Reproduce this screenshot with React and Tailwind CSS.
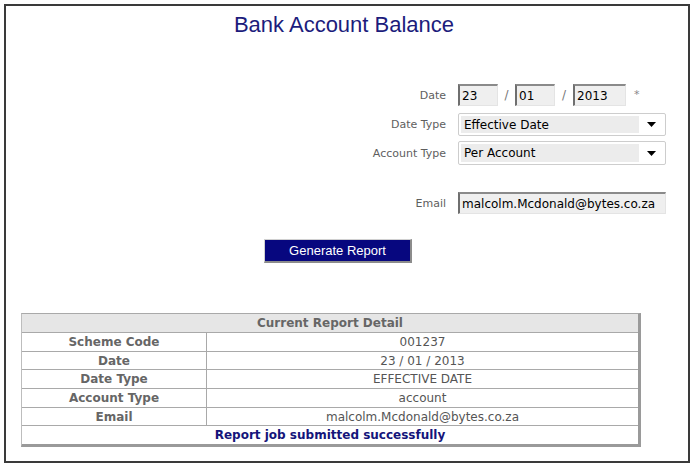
import React from "react";

const dv = { fontFamily: '"DejaVu Sans", Verdana, sans-serif' };
const ar = { fontFamily: '"Liberation Sans", Arial, sans-serif' };

function Arrow() {
  return (
    <svg width="9" height="5" viewBox="0 0 9 5" className="block">
      <path d="M0 0 H9 L4.5 5 Z" fill="#000" />
    </svg>
  );
}

function InsetInput({ value, w }) {
  return (
    <div
      className={`${w} h-[22px] flex items-center bg-[#efefef] border-l-2 border-t-2 border-r border-b border-l-[#6f6f6f] border-t-[#8a8a8a] border-r-[#e4e4e4] border-b-[#e4e4e4] pl-[2px] text-[12px] text-black leading-none`}
      style={dv}
    >
      {value}
    </div>
  );
}

function Select({ value, h }) {
  return (
    <div className={`w-[208px] ${h} flex border border-[#cdcdcd] rounded-[2px] bg-white p-[2px]`}>
      <div className="flex-1 bg-[#ececec] flex items-center pl-[3px] text-[12px] text-black leading-none" style={dv}>
        {value}
      </div>
      <div className="w-[24px] flex items-center justify-center">
        <Arrow />
      </div>
    </div>
  );
}

function Label({ children }) {
  return (
    <div className="w-[120px] text-right text-[11px] text-[#5e5e5e] leading-none" style={dv}>
      {children}
    </div>
  );
}

function Row({ label, value, h = "h-[19px]" }) {
  return (
    <div className={`grid grid-cols-[184px_1fr] ${h} border-b border-[#a9a9a9] text-[12px] leading-none`} style={dv}>
      <div className="flex items-center justify-center font-bold text-[#666]">{label}</div>
      <div className="flex items-center justify-center border-l border-[#a9a9a9] text-[#555]">{value}</div>
    </div>
  );
}

export default function App() {
  return (
    <div className="w-[692px] h-[466px] bg-white p-[4px]">
      <div className="w-[686px] h-[459px] border-2 border-[#3a3a3a] bg-white flex flex-col">
        <div className="pt-[6px] pr-[6px] text-center text-[22px] leading-[26px] text-[#1c1c7c]" style={ar}>
          Bank Account Balance
        </div>

        <div className="ml-[320px] mt-[46px] flex flex-col">
          <div className="flex items-center gap-[12px] h-[22px]">
            <Label>Date</Label>
            <div className="flex items-center">
              <InsetInput value="23" w="w-[40px]" />
              <span className="w-[17px] text-center text-[12px] text-[#777]" style={dv}>/</span>
              <InsetInput value="01" w="w-[40px]" />
              <span className="w-[18px] text-center text-[12px] text-[#777]" style={dv}>/</span>
              <InsetInput value="2013" w="w-[53px]" />
              <span className="ml-[8px] text-[11px] text-[#888]" style={dv}>*</span>
            </div>
          </div>

          <div className="flex items-center gap-[12px] mt-[7px]">
            <Label>Date Type</Label>
            <Select value="Effective Date" h="h-[23px]" />
          </div>

          <div className="flex items-center gap-[12px] mt-[5px]">
            <Label>Account Type</Label>
            <Select value="Per Account" h="h-[24px]" />
          </div>

          <div className="flex items-center gap-[12px] mt-[27px]">
            <Label>Email</Label>
            <InsetInput value="malcolm.Mcdonald@bytes.co.za" w="w-[208px]" />
          </div>
        </div>

        <div className="ml-[258px] mt-[25px]">
          <div
            className="w-[148px] h-[24px] flex items-center justify-center bg-[#07077f] border-l border-t border-r-2 border-b-2 border-l-[#d0d0d0] border-t-[#d0d0d0] border-r-[#8c8c8c] border-b-[#8c8c8c] text-white text-[13px] leading-none"
            style={ar}
          >
            Generate Report
          </div>
        </div>

        <div className="ml-[15px] mt-[50px] w-[620px] flex flex-col border-l border-t border-r-[3px] border-b-[3px] border-l-[#bdbdbd] border-t-[#a9a9a9] border-r-[#9a9a9a] border-b-[#9a9a9a]">
          <div className="h-[19px] bg-[#e6e6e6] border-b border-[#a9a9a9] flex items-center justify-center text-[12px] font-bold text-[#666] leading-none" style={dv}>
            Current Report Detail
          </div>
          <Row label="Scheme Code" value="001237" />
          <Row label="Date" value="23 / 01 / 2013" h="h-[18px]" />
          <Row label="Date Type" value="EFFECTIVE DATE" />
          <Row label="Account Type" value="account" />
          <Row label="Email" value="malcolm.Mcdonald@bytes.co.za" h="h-[18px]" />
          <div className="h-[18px] flex items-center justify-center text-[12px] font-bold text-[#14147a] leading-none" style={dv}>
            Report job submitted successfully
          </div>
        </div>
      </div>
    </div>
  );
}
